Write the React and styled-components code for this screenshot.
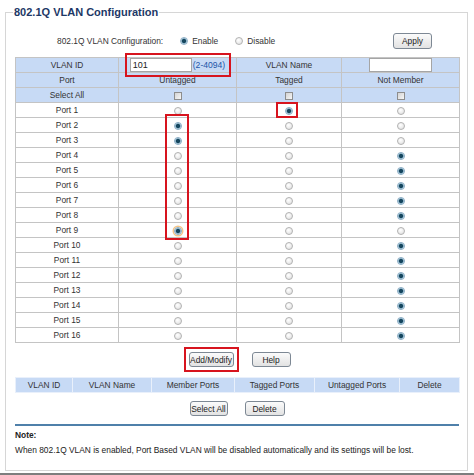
import styled, { createGlobalStyle, css } from "styled-components";

const GlobalStyle = createGlobalStyle`
  html, body {
    margin: 0;
    padding: 0;
    background: #fff;
  }
  body {
    font-family: "Liberation Sans", Arial, sans-serif;
    color: #333;
    overflow: hidden;
  }
`;

const Page = styled.div`
  padding: 5px 0 0 5px;
  width: 463px;
`;

const Fieldset = styled.fieldset`
  box-sizing: border-box;
  width: 463px;
  margin: 0;
  padding: 0 8px 14px 9px;
  border: 1px solid #d6d6d6;
  min-inline-size: 0;
`;

const Legend = styled.legend`
  margin-left: -2px;
  padding: 0 1px;
  font-size: 11px;
  line-height: 14px;
  font-weight: bold;
  color: #1d3866;
`;

const ConfigRow = styled.div`
  display: flex;
  align-items: center;
  height: 16px;
  margin-top: 14px;
  padding-left: 42px;
  padding-right: 27px;
  font-size: 8.4px;
`;

const Option = styled.label`
  display: flex;
  align-items: center;
  gap: 4px;
  margin-left: ${(p) => p.$gap}px;
`;

const Button = styled.button`
  box-sizing: border-box;
  height: 15px;
  width: ${(p) => p.$w}px;
  padding: 0;
  margin-left: ${(p) => p.$ml || 0}px;
  font-family: inherit;
  font-size: 8.4px;
  color: #222;
  background: linear-gradient(#fbfbfb, #e2e2e2);
  border: 1px solid #7d8894;
  border-radius: 3px;
`;

const ApplyButton = styled(Button)`
  margin-left: auto;
  height: 16px;
`;

const MarkedFrame = styled.span`
  display: inline-flex;
  padding: 3px;
  margin: -5px 0;
  border: 2px solid #d7141e;
`;

const TableWrap = styled.div`
  position: relative;
  margin-top: 8px;
`;

const Grid = styled.table`
  width: 444px;
  border-collapse: collapse;
  table-layout: fixed;
  font-size: 8.4px;
`;

const Row = styled.tr`
  height: 15px;
  background: ${(p) => (p.$head ? "#c7daf5" : "#fff")};
`;

const Cell = styled.td`
  padding: 0;
  line-height: 12px;
  text-align: center;
  border: 1px solid ${(p) => (p.$light ? "#e9f0fb" : "#c4c4c4")};
  color: #333;
  white-space: nowrap;
  overflow: hidden;
`;

const CellInner = styled.div`
  display: flex;
  align-items: center;
  justify-content: center;
  gap: 1px;
  height: 12px;
`;

const TextInput = styled.input`
  box-sizing: border-box;
  width: ${(p) => p.$w}px;
  height: 14px;
  margin: 0;
  padding: 0 2px;
  font-family: inherit;
  font-size: 9px;
  color: #222;
  border: 1px solid #a5a5a5;
  background: #fff;
`;

const Range = styled.span`
  color: #2356a8;
  font-size: 8.6px;
`;

const Radio = styled.span`
  display: inline-block;
  box-sizing: border-box;
  width: 8px;
  height: 8px;
  border-radius: 50%;
  vertical-align: middle;
  border: 1px solid #b3b3b3;
  background: radial-gradient(circle at 40% 35%, #ffffff, #dcdcdc);
  ${(p) =>
    p.$checked &&
    css`
      border-color: #8fb0c6;
      background: radial-gradient(circle, #16465e 0 1.6px, #4a7d96 2.1px, #b9d2e2 2.8px);
    `}
  ${(p) =>
    p.$focus &&
    css`
      box-shadow: 0 0 0 1.5px #f4c487;
    `}
`;

const Check = styled.span`
  display: inline-block;
  box-sizing: border-box;
  width: 8px;
  height: 8px;
  vertical-align: middle;
  border: 1px solid #8d8d8d;
  background: linear-gradient(135deg, #d4d4d4, #f6f6f6);
`;

const Mark = styled.span`
  position: absolute;
  box-sizing: border-box;
  border: 2px solid #d7141e;
  pointer-events: none;
`;

const ButtonRow = styled.div`
  display: flex;
  justify-content: center;
  align-items: center;
  height: 15px;
  margin-top: ${(p) => p.$mt}px;
`;

const SecondTable = styled(Grid)`
  margin-top: 10px;
`;

const Divider = styled.div`
  height: 2px;
  margin-top: 8px;
  background: #4f80aa;
`;

const Note = styled.div`
  margin-top: 3px;
  font-size: 8.4px;
  line-height: 12px;
  color: #222;
`;

const NoteTitle = styled.div`
  font-weight: bold;
  margin-bottom: 3px;
`;

const Footer = styled.div`
  height: 8px;
  margin-top: 2px;
  background: #7e7e7e;
`;

const ports = Array.from({ length: 16 }, (_, i) => {
  const n = i + 1;
  let mode = "none";
  if (n === 1) mode = "tagged";
  if (n === 2 || n === 3 || n === 9) mode = "untagged";
  return { n, mode };
});

const listCols = [57, 79, 83, 80, 85, 60];
const listHeads = ["VLAN ID", "VLAN Name", "Member Ports", "Tagged Ports", "Untagged Ports", "Delete"];

export default function App() {
  return (
    <>
      <GlobalStyle />
      <Page>
        <Fieldset>
          <Legend>802.1Q VLAN Configuration</Legend>
          <ConfigRow>
            <span>802.1Q VLAN Configuration:</span>
            <Option $gap={17}>
              <Radio $checked />
              Enable
            </Option>
            <Option $gap={17}>
              <Radio />
              Disable
            </Option>
            <ApplyButton $w={39}>Apply</ApplyButton>
          </ConfigRow>

          <TableWrap>
            <Grid>
              <colgroup>
                <col style={{ width: 103 }} />
                <col style={{ width: 118 }} />
                <col style={{ width: 105 }} />
                <col style={{ width: 118 }} />
              </colgroup>
              <tbody>
                <Row $head>
                  <Cell>VLAN ID</Cell>
                  <Cell>
                    <CellInner>
                      <TextInput $w={62} defaultValue="101" />
                      <Range>(2-4094)</Range>
                    </CellInner>
                  </Cell>
                  <Cell>VLAN Name</Cell>
                  <Cell>
                    <CellInner>
                      <TextInput $w={63} defaultValue="" />
                    </CellInner>
                  </Cell>
                </Row>
                <Row $head>
                  <Cell>Port</Cell>
                  <Cell>Untagged</Cell>
                  <Cell>Tagged</Cell>
                  <Cell>Not Member</Cell>
                </Row>
                <Row $head>
                  <Cell>Select All</Cell>
                  <Cell><Check /></Cell>
                  <Cell><Check /></Cell>
                  <Cell><Check /></Cell>
                </Row>
                {ports.map((p) => (
                  <Row key={p.n}>
                    <Cell>Port {p.n}</Cell>
                    <Cell>
                      <Radio $checked={p.mode === "untagged"} $focus={p.n === 9} />
                    </Cell>
                    <Cell>
                      <Radio $checked={p.mode === "tagged"} />
                    </Cell>
                    <Cell>
                      <Radio $checked={p.mode === "none"} />
                    </Cell>
                  </Row>
                ))}
              </tbody>
            </Grid>
            <Mark style={{ left: 110, top: -4, width: 106, height: 24 }} />
            <Mark style={{ left: 261, top: 45, width: 22, height: 16 }} />
            <Mark style={{ left: 150, top: 57, width: 24, height: 126 }} />
          </TableWrap>

          <ButtonRow $mt={9}>
            <MarkedFrame>
              <Button $w={45}>Add/Modify</Button>
            </MarkedFrame>
            <Button $w={39} $ml={13}>Help</Button>
          </ButtonRow>

          <SecondTable>
            <colgroup>
              {listCols.map((w, i) => (
                <col key={i} style={{ width: w }} />
              ))}
            </colgroup>
            <tbody>
              <Row $head>
                {listHeads.map((h) => (
                  <Cell key={h} $light>{h}</Cell>
                ))}
              </Row>
            </tbody>
          </SecondTable>

          <ButtonRow $mt={8}>
            <Button $w={38}>Select All</Button>
            <Button $w={40} $ml={17}>Delete</Button>
          </ButtonRow>

          <Divider />
          <Note>
            <NoteTitle>Note:</NoteTitle>
            When 802.1Q VLAN is enabled, Port Based VLAN will be disabled automatically and its settings will be lost.
          </Note>
        </Fieldset>
      </Page>
      <Footer />
    </>
  );
}
